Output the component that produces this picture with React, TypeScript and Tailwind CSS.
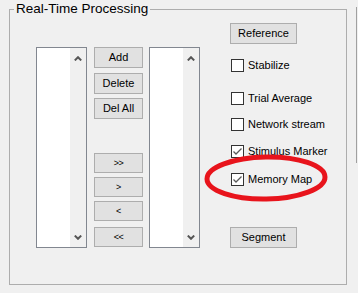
import React from 'react';

const Chevron = ({ down = false }: { down?: boolean }) => (
  <svg width="8" height="5" viewBox="0 0 8 5" className={down ? 'rotate-180' : ''}>
    <polyline points="0.8,4.4 4,1.2 7.2,4.4" fill="none" stroke="#555555" strokeWidth="2" />
  </svg>
);

const ListBox = () => (
  <div className="flex w-[51px] h-[201px] border border-[#828790] bg-white">
    <div className="flex-1" />
    <div className="w-[16px] bg-[#f0f0f0] flex flex-col items-center justify-between pt-[8px] pb-[7px]">
      <Chevron />
      <Chevron down />
    </div>
  </div>
);

const Button = ({ label, className = '', small = false }: { label: string; className?: string; small?: boolean }) => (
  <button
    className={`flex items-center justify-center bg-[#e1e1e1] border border-[#adadad] text-black leading-none ${
      small ? 'text-[9px] tracking-[-0.5px]' : 'text-[11px]'
    } ${className}`}
  >
    {label}
  </button>
);

const Check = ({ label, checked = false, className = '' }: { label: string; checked?: boolean; className?: string }) => (
  <div className={`flex items-center h-[13px] gap-[4px] ml-[1px] ${className}`}>
    <div className="w-[13px] h-[13px] border border-[#333333] bg-white flex items-center justify-center">
      {checked && (
        <svg width="11" height="11" viewBox="0 0 11 11">
          <polyline points="1.5,5.5 4,8 9.5,2.5" fill="none" stroke="#5a5a5a" strokeWidth="1.3" />
        </svg>
      )}
    </div>
    <span className="text-[11px] leading-none text-black whitespace-nowrap">{label}</span>
  </div>
);

export default function App() {
  return (
    <div className="relative w-[358px] h-[293px] bg-[#f0f0f0] overflow-hidden pt-[9px] pl-[9px] font-['Liberation_Sans',Arial,sans-serif]">
      {/* Real-Time Processing group */}
      <div className="relative w-[338px] h-[276px] border border-[#adadad]">
        <div className="absolute left-[4px] top-[-8px] px-[2px] bg-[#f0f0f0] text-[13.5px] leading-none text-black whitespace-nowrap">
          Real-Time Processing
        </div>

        <div className="flex items-start pl-[26px]">
          <div className="flex items-start pt-[37px]">
            <ListBox />

            <div className="flex flex-col w-[49px] ml-[7px]">
              <Button label="Add" className="h-[21px]" />
              <Button label="Delete" className="h-[21px] mt-[5px]" />
              <Button label="Del All" className="h-[21px] mt-[4px]" />
              <Button label=">>" small className="h-[20px] mt-[34px]" />
              <Button label=">" small className="h-[20px] mt-[4px]" />
              <Button label="<" small className="h-[20px] mt-[4px]" />
              <Button label="<<" small className="h-[20px] mt-[6px]" />
            </div>

            <div className="ml-[6px]">
              <ListBox />
            </div>
          </div>

          <div className="flex flex-col ml-[30px] pt-[13px]">
            <Button label="Reference" className="w-[67px] h-[21px]" />
            <Check label="Stabilize" className="mt-[15px]" />
            <Check label="Trial Average" className="mt-[20px]" />
            <Check label="Network stream" className="mt-[13px]" />
            <Check label="Stimulus Marker" checked className="mt-[14px]" />
            <Check label="Memory Map" checked className="mt-[15px]" />
            <Button label="Segment" className="w-[67px] h-[21px] mt-[41px]" />
          </div>
        </div>
      </div>

      {/* neighbouring panel edge */}
      <div className="absolute left-[356px] top-[7px] w-px h-[156px] bg-[#a0a0a0]" />

      {/* red annotation */}
      <svg className="absolute left-0 top-0 pointer-events-none" width="358" height="293">
        <ellipse cx="266" cy="178" rx="59" ry="21" fill="none" stroke="#e8141c" strokeWidth="5" transform="rotate(-1 266 178)" />
      </svg>
    </div>
  );
}
